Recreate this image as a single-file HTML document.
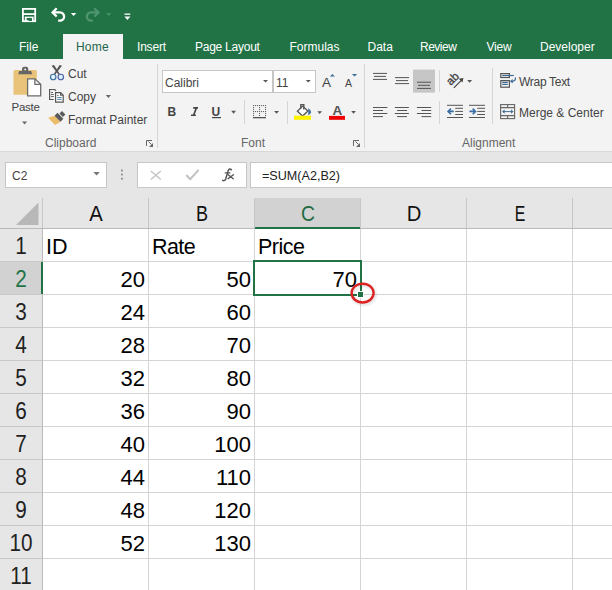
<!DOCTYPE html><html><head><meta charset="utf-8"><style>
*{margin:0;padding:0;box-sizing:border-box}
html,body{width:612px;height:590px;overflow:hidden;background:#fff;font-family:"Liberation Sans",sans-serif}
.a{position:absolute}
.t{position:absolute;white-space:nowrap;line-height:1}
svg{position:absolute;overflow:visible}
</style></head><body>
<div class="a" style="left:0px;top:0px;width:612px;height:59px;background:#217346;"></div>
<div class="a" style="left:63px;top:34px;width:60px;height:25px;background:#f3f3f3;"></div>
<div class="t" style="left:19px;top:41px;font-size:12px;color:#fff;letter-spacing:0">File</div>
<div class="t" style="left:76px;top:41px;font-size:12px;color:#24634a;letter-spacing:0.2px">Home</div>
<div class="t" style="left:137px;top:41px;font-size:12px;color:#fff;letter-spacing:-0.2px">Insert</div>
<div class="t" style="left:195px;top:41px;font-size:12px;color:#fff;letter-spacing:-0.25px">Page Layout</div>
<div class="t" style="left:289.5px;top:41px;font-size:12px;color:#fff;letter-spacing:0">Formulas</div>
<div class="t" style="left:367.5px;top:41px;font-size:12px;color:#fff;letter-spacing:0">Data</div>
<div class="t" style="left:420px;top:41px;font-size:12px;color:#fff;letter-spacing:-0.5px">Review</div>
<div class="t" style="left:486.5px;top:41px;font-size:12px;color:#fff;letter-spacing:-0.2px">View</div>
<div class="t" style="left:540px;top:41px;font-size:12px;color:#fff;letter-spacing:0">Developer</div>
<div class="a" style="left:0px;top:59px;width:612px;height:92px;background:#f3f3f3;"></div>
<div class="t" style="left:11.5px;top:102px;font-size:11.5px;color:#444;letter-spacing:-0.25px">Paste</div>
<div class="t" style="left:68px;top:68px;font-size:12px;color:#444;">Cut</div>
<div class="t" style="left:68px;top:91px;font-size:12px;color:#444;">Copy</div>
<div class="t" style="left:68px;top:114px;font-size:12px;color:#444;">Format Painter</div>
<div class="t" style="left:45px;top:137px;font-size:12px;color:#666;">Clipboard</div>
<div class="a" style="left:157px;top:64px;width:1px;height:84px;background:#d5d5d5;"></div>
<div class="a" style="left:244px;top:100px;width:1px;height:24px;background:#d5d5d5;"></div>
<div class="a" style="left:287px;top:101px;width:1px;height:23px;background:#d5d5d5;"></div>
<div class="a" style="left:439px;top:70px;width:1px;height:22px;background:#d5d5d5;"></div>
<div class="a" style="left:439px;top:101px;width:1px;height:23px;background:#d5d5d5;"></div>
<div class="a" style="left:492px;top:68px;width:1px;height:56px;background:#d5d5d5;"></div>
<div class="t" style="left:241px;top:137px;font-size:12px;color:#666;">Font</div>
<div class="a" style="left:364px;top:64px;width:1px;height:84px;background:#d5d5d5;"></div>
<div class="t" style="left:519px;top:76px;font-size:12px;color:#444;letter-spacing:-0.3px">Wrap Text</div>
<div class="t" style="left:519px;top:107px;font-size:12px;color:#444;">Merge &amp; Center</div>
<div class="t" style="left:462px;top:137px;font-size:12px;color:#666;">Alignment</div>
<div class="a" style="left:0px;top:151px;width:612px;height:47px;background:#e6e6e6;"></div>
<div class="a" style="left:0px;top:151px;width:612px;height:1px;background:#d8d8d8;"></div>
<div class="a" style="left:5px;top:162px;width:102px;height:26px;background:#fff;border:1px solid #c6c6c6"></div>
<div class="t" style="left:12px;top:170px;font-size:12px;color:#444;">C2</div>
<div class="a" style="left:137px;top:162px;width:110px;height:26px;background:#fff;border:1px solid #c6c6c6"></div>
<div class="a" style="left:250px;top:162px;width:380px;height:26px;background:#fff;border:1px solid #c6c6c6"></div>
<div class="t" style="left:262px;top:170px;font-size:12.6px;color:#222;">=SUM(A2,B2)</div>
<div class="a" style="left:0px;top:198px;width:612px;height:30px;background:#e6e6e6;"></div>
<div class="a" style="left:255px;top:198px;width:105px;height:30px;background:#d2d2d2;"></div>
<div class="a" style="left:0px;top:228px;width:42px;height:362px;background:#e6e6e6;"></div>
<div class="a" style="left:0px;top:262px;width:42px;height:32px;background:#d2d2d2;"></div>
<div class="a" style="left:43px;top:261px;width:569px;height:1px;background:#d4d4d4;"></div>
<div class="a" style="left:43px;top:294px;width:569px;height:1px;background:#d4d4d4;"></div>
<div class="a" style="left:43px;top:327px;width:569px;height:1px;background:#d4d4d4;"></div>
<div class="a" style="left:43px;top:360px;width:569px;height:1px;background:#d4d4d4;"></div>
<div class="a" style="left:43px;top:393px;width:569px;height:1px;background:#d4d4d4;"></div>
<div class="a" style="left:43px;top:426px;width:569px;height:1px;background:#d4d4d4;"></div>
<div class="a" style="left:43px;top:459px;width:569px;height:1px;background:#d4d4d4;"></div>
<div class="a" style="left:43px;top:492px;width:569px;height:1px;background:#d4d4d4;"></div>
<div class="a" style="left:43px;top:525px;width:569px;height:1px;background:#d4d4d4;"></div>
<div class="a" style="left:43px;top:558px;width:569px;height:1px;background:#d4d4d4;"></div>
<div class="a" style="left:148px;top:228px;width:1px;height:362px;background:#d4d4d4;"></div>
<div class="a" style="left:254px;top:228px;width:1px;height:362px;background:#d4d4d4;"></div>
<div class="a" style="left:360px;top:228px;width:1px;height:362px;background:#d4d4d4;"></div>
<div class="a" style="left:466px;top:228px;width:1px;height:362px;background:#d4d4d4;"></div>
<div class="a" style="left:572px;top:228px;width:1px;height:362px;background:#d4d4d4;"></div>
<div class="a" style="left:0px;top:228px;width:612px;height:1px;background:#bababa;"></div>
<div class="a" style="left:42px;top:198px;width:1px;height:30px;background:#c6c6c6;"></div>
<div class="a" style="left:148px;top:198px;width:1px;height:30px;background:#c6c6c6;"></div>
<div class="a" style="left:254px;top:198px;width:1px;height:30px;background:#c6c6c6;"></div>
<div class="a" style="left:360px;top:198px;width:1px;height:30px;background:#c6c6c6;"></div>
<div class="a" style="left:466px;top:198px;width:1px;height:30px;background:#c6c6c6;"></div>
<div class="a" style="left:572px;top:198px;width:1px;height:30px;background:#c6c6c6;"></div>
<div class="a" style="left:42px;top:228px;width:1px;height:362px;background:#bababa;"></div>
<div class="a" style="left:0px;top:261px;width:42px;height:1px;background:#c9c9c9;"></div>
<div class="a" style="left:0px;top:294px;width:42px;height:1px;background:#c9c9c9;"></div>
<div class="a" style="left:0px;top:327px;width:42px;height:1px;background:#c9c9c9;"></div>
<div class="a" style="left:0px;top:360px;width:42px;height:1px;background:#c9c9c9;"></div>
<div class="a" style="left:0px;top:393px;width:42px;height:1px;background:#c9c9c9;"></div>
<div class="a" style="left:0px;top:426px;width:42px;height:1px;background:#c9c9c9;"></div>
<div class="a" style="left:0px;top:459px;width:42px;height:1px;background:#c9c9c9;"></div>
<div class="a" style="left:0px;top:492px;width:42px;height:1px;background:#c9c9c9;"></div>
<div class="a" style="left:0px;top:525px;width:42px;height:1px;background:#c9c9c9;"></div>
<div class="a" style="left:0px;top:558px;width:42px;height:1px;background:#c9c9c9;"></div>
<div class="a" style="left:255px;top:227px;width:105px;height:2px;background:#217346;"></div>
<div class="a" style="left:41px;top:262px;width:2px;height:32px;background:#217346;"></div>
<svg style="left:0;top:198px" width="42" height="30"><path d="M38.5 4.5 L38.5 27 L16 27 Z" fill="#b8b8b8"/></svg>
<div class="t" style="left:66.2px;top:203px;width:60px;text-align:center;font-size:22px;color:#111;transform:scaleX(0.92)">A</div>
<div class="t" style="left:171.7px;top:203px;width:60px;text-align:center;font-size:22px;color:#111;transform:scaleX(0.82)">B</div>
<div class="t" style="left:278.2px;top:203px;width:60px;text-align:center;font-size:22px;color:#1e6b41;transform:scaleX(0.88)">C</div>
<div class="t" style="left:384.15px;top:203px;width:60px;text-align:center;font-size:22px;color:#111;transform:scaleX(0.92)">D</div>
<div class="t" style="left:490px;top:203px;width:60px;text-align:center;font-size:22px;color:#111;transform:scaleX(0.72)">E</div>
<div class="t" style="left:0;top:235px;width:42px;text-align:center;font-size:23px;color:#222;transform:scaleX(0.9)">1</div>
<div class="t" style="left:0;top:268px;width:42px;text-align:center;font-size:23px;color:#217346;transform:scaleX(0.9)">2</div>
<div class="t" style="left:0;top:301px;width:42px;text-align:center;font-size:23px;color:#222;transform:scaleX(0.9)">3</div>
<div class="t" style="left:0;top:334px;width:42px;text-align:center;font-size:23px;color:#222;transform:scaleX(0.9)">4</div>
<div class="t" style="left:0;top:367px;width:42px;text-align:center;font-size:23px;color:#222;transform:scaleX(0.9)">5</div>
<div class="t" style="left:0;top:400px;width:42px;text-align:center;font-size:23px;color:#222;transform:scaleX(0.9)">6</div>
<div class="t" style="left:0;top:433px;width:42px;text-align:center;font-size:23px;color:#222;transform:scaleX(0.9)">7</div>
<div class="t" style="left:0;top:466px;width:42px;text-align:center;font-size:23px;color:#222;transform:scaleX(0.9)">8</div>
<div class="t" style="left:0;top:499px;width:42px;text-align:center;font-size:23px;color:#222;transform:scaleX(0.9)">9</div>
<div class="t" style="left:0;top:532px;width:42px;text-align:center;font-size:23px;color:#222;transform:scaleX(0.9)">10</div>
<div class="t" style="left:0;top:565px;width:42px;text-align:center;font-size:23px;color:#222;transform:scaleX(0.9)">11</div>
<div class="t" style="left:46px;top:236.5px;font-size:21.5px;color:#000;">ID</div>
<div class="t" style="left:152px;top:236.5px;font-size:21.5px;color:#000;letter-spacing:-0.6px">Rate</div>
<div class="t" style="left:258px;top:236.5px;font-size:21.5px;color:#000;letter-spacing:-0.5px">Price</div>
<div class="t" style="left:42px;top:269px;width:103px;text-align:right;font-size:22px;color:#000">20</div>
<div class="t" style="left:148px;top:269px;width:103px;text-align:right;font-size:22px;color:#000">50</div>
<div class="t" style="left:42px;top:302px;width:103px;text-align:right;font-size:22px;color:#000">24</div>
<div class="t" style="left:148px;top:302px;width:103px;text-align:right;font-size:22px;color:#000">60</div>
<div class="t" style="left:42px;top:335px;width:103px;text-align:right;font-size:22px;color:#000">28</div>
<div class="t" style="left:148px;top:335px;width:103px;text-align:right;font-size:22px;color:#000">70</div>
<div class="t" style="left:42px;top:368px;width:103px;text-align:right;font-size:22px;color:#000">32</div>
<div class="t" style="left:148px;top:368px;width:103px;text-align:right;font-size:22px;color:#000">80</div>
<div class="t" style="left:42px;top:401px;width:103px;text-align:right;font-size:22px;color:#000">36</div>
<div class="t" style="left:148px;top:401px;width:103px;text-align:right;font-size:22px;color:#000">90</div>
<div class="t" style="left:42px;top:434px;width:103px;text-align:right;font-size:22px;color:#000">40</div>
<div class="t" style="left:148px;top:434px;width:103px;text-align:right;font-size:22px;color:#000">100</div>
<div class="t" style="left:42px;top:467px;width:103px;text-align:right;font-size:22px;color:#000">44</div>
<div class="t" style="left:148px;top:467px;width:103px;text-align:right;font-size:22px;color:#000">110</div>
<div class="t" style="left:42px;top:500px;width:103px;text-align:right;font-size:22px;color:#000">48</div>
<div class="t" style="left:148px;top:500px;width:103px;text-align:right;font-size:22px;color:#000">120</div>
<div class="t" style="left:42px;top:533px;width:103px;text-align:right;font-size:22px;color:#000">52</div>
<div class="t" style="left:148px;top:533px;width:103px;text-align:right;font-size:22px;color:#000">130</div>
<div class="t" style="left:254px;top:269px;width:103px;text-align:right;font-size:22px;color:#000">70</div>
<div class="a" style="left:253px;top:260px;width:109px;height:36px;background:transparent;border:2px solid #217346"></div>
<div class="a" style="left:357px;top:291px;width:7px;height:7px;background:#fff;"></div>
<div class="a" style="left:358px;top:292px;width:5px;height:5px;background:#217346;"></div>
<svg style="left:0;top:0" width="612" height="590"><ellipse cx="363.8" cy="294.6" rx="11" ry="9.4" fill="none" stroke="rgba(0,0,0,0.035)" stroke-width="6"/><ellipse cx="363.8" cy="294.6" rx="11" ry="9.4" fill="none" stroke="rgba(0,0,0,0.04)" stroke-width="3.5"/><ellipse cx="362.6" cy="293.1" rx="11" ry="9.4" fill="none" stroke="#dd2222" stroke-width="2.4"/></svg>

<svg style="left:0;top:0" width="612" height="200" viewBox="0 0 612 200">
<!-- save -->
<rect x="22.9" y="8.9" width="12.3" height="12.3" fill="none" stroke="#fff" stroke-width="1.8"/>
<rect x="22" y="13.2" width="14" height="1.8" fill="#fff"/>
<rect x="24.8" y="16.6" width="8.8" height="5.4" fill="#fff"/>
<rect x="26.6" y="17.9" width="5.3" height="2.3" fill="#217346"/>
<rect x="28.6" y="19.5" width="3.3" height="1.5" fill="#217346"/>
<!-- undo -->
<g fill="none" stroke="#fff" stroke-width="2.3">
 <path d="M52.6 12.4H60A4.1 4.1 0 0 1 60 20.6H58.2"/>
 <path d="M56.7 8.3L52.6 12.4L56.7 16.5"/>
</g>
<path d="M70.8 13h5.6l-2.8 3z" fill="#fff"/>
<!-- redo faded -->
<g fill="none" stroke="#4f9670" stroke-width="2.3">
 <path d="M98.4 12.4H91A4.1 4.1 0 0 0 91 20.6H92.8"/>
 <path d="M94.3 8.3L98.4 12.4L94.3 16.5"/>
</g>
<path d="M106 13.2h5.3l-2.65 2.6z" fill="#4f9670"/>
<!-- customize -->
<rect x="124.5" y="13.5" width="5.8" height="1.3" fill="#fff"/>
<path d="M124.4 16.4h6l-3 3.6z" fill="#fff"/>

<!-- paste -->
<path d="M15 70h20.3a1.5 1.5 0 0 1 1.5 1.5v23.3h-23.3v-23.3a1.5 1.5 0 0 1 1.5-1.5z" fill="#e9c379"/>
<path d="M19.2 71h12l1 3.2h-14z" fill="#666"/>
<rect x="22" y="66.8" width="6.3" height="5.4" rx="2.2" fill="#666"/>
<circle cx="25.15" cy="69.4" r="0.95" fill="#f3f3f3"/>
<path d="M27.6 78.8h7.3l5.8 5.6v11.5h-13.1z" fill="#fff" stroke="#6b6b6b" stroke-width="1.3"/>
<path d="M34.9 78.8v5.6h5.8" fill="none" stroke="#6b6b6b" stroke-width="1.3"/>
<path d="M22 121.6h5.2l-2.6 2.8z" fill="#6b6b6b"/>

<!-- scissors -->
<path d="M51.6 65.8L54 65L60.2 74.4L58.8 75z" fill="#555"/>
<path d="M62 65.8L59.6 65L53.4 74.4L54.8 75z" fill="#555"/>
<circle cx="53.2" cy="77" r="2.75" fill="#dff1fb" stroke="#3f74a0" stroke-width="1.2"/>
<circle cx="60.8" cy="77" r="2.75" fill="#dff1fb" stroke="#4e66a8" stroke-width="1.2"/>
<!-- copy -->
<path d="M105.8 95.1h5.2l-2.6 3z" fill="#666"/>
<path d="M53.8 99.5h-4.2v-10h5.2l1.2 1.3" fill="none" stroke="#555" stroke-width="1.2"/>
<rect x="51" y="92" width="2" height="0.9" fill="#555"/>
<rect x="51" y="94" width="2.8" height="0.9" fill="#555"/>
<rect x="51" y="96" width="2.8" height="0.9" fill="#555"/>
<path d="M55.6 92.6h5l2.6 2.6v7h-7.6z" fill="#fff" stroke="#555" stroke-width="1.2"/>
<path d="M60.6 92.6v2.6h2.6" fill="none" stroke="#555" stroke-width="1.1"/>
<rect x="57.2" y="95" width="1.4" height="0.9" fill="#555"/>
<rect x="57.2" y="97" width="4.4" height="0.9" fill="#3d7a9c"/>
<rect x="57.2" y="98.9" width="4.4" height="0.9" fill="#3d7a9c"/>

<!-- format painter -->
<g transform="translate(59,117.4) rotate(45)">
 <path d="M-4.3 1.9H4.1L2.6 8.2L-7.4 8z" fill="#ebbd6a"/>
 <rect x="-4.3" y="-2.1" width="8.4" height="4.1" fill="#5a5a5a"/>
 <rect x="-2.4" y="-6.6" width="4.8" height="3.5" fill="#5a5a5a"/>
</g>
<!-- launchers -->
<g fill="none" stroke="#666" stroke-width="1">
 <path d="M146.5 146v-5.5h5.5M148.5 141.5l3 3"/>
 <path d="M353.5 146v-5.5h5.5M355.5 141.5l3 3"/>
</g>
<path d="M153 143v4h-4z" fill="#666"/>
<path d="M360 143v4h-4z" fill="#666"/>
<!-- font name box / size box -->
<rect x="162.5" y="70.5" width="110" height="22" fill="#fff" stroke="#c6c6c6"/>
<rect x="273.5" y="70.5" width="42" height="22" fill="#fff" stroke="#c6c6c6"/>
<path d="M263 80h5l-2.5 2.5z" fill="#555"/>
<path d="M305.8 80h5l-2.5 2.5z" fill="#555"/>
<!-- grow/shrink -->
<path d="M329.9 76.5h5l-2.5-2.4z" fill="#3e6d9c"/>
<path d="M351.9 73.9h5.3l-2.65 2.6z" fill="#3e6d9c"/>
<!-- B I U arrow -->
<path d="M231.2 110.8h4.8l-2.4 3z" fill="#555"/>
<rect x="212" y="117" width="9" height="1.2" fill="#444"/>
<!-- borders -->
<g fill="#666">
<rect x="253" y="105" width="1.1" height="1.1"/><rect x="253" y="111" width="1.1" height="1.1"/><rect x="255" y="105" width="1.1" height="1.1"/><rect x="255" y="111" width="1.1" height="1.1"/><rect x="257" y="105" width="1.1" height="1.1"/><rect x="257" y="111" width="1.1" height="1.1"/><rect x="259" y="105" width="1.1" height="1.1"/><rect x="259" y="111" width="1.1" height="1.1"/><rect x="261" y="105" width="1.1" height="1.1"/><rect x="261" y="111" width="1.1" height="1.1"/><rect x="263" y="105" width="1.1" height="1.1"/><rect x="263" y="111" width="1.1" height="1.1"/><rect x="265" y="105" width="1.1" height="1.1"/><rect x="265" y="111" width="1.1" height="1.1"/><rect x="253" y="107" width="1.1" height="1.1"/><rect x="253" y="109" width="1.1" height="1.1"/><rect x="253" y="113" width="1.1" height="1.1"/><rect x="253" y="115" width="1.1" height="1.1"/><rect x="259" y="107" width="1.1" height="1.1"/><rect x="259" y="109" width="1.1" height="1.1"/><rect x="259" y="113" width="1.1" height="1.1"/><rect x="259" y="115" width="1.1" height="1.1"/><rect x="265" y="107" width="1.1" height="1.1"/><rect x="265" y="109" width="1.1" height="1.1"/><rect x="265" y="113" width="1.1" height="1.1"/><rect x="265" y="115" width="1.1" height="1.1"/>
</g>
<rect x="253" y="117" width="13" height="1.3" fill="#555"/>
<path d="M274.1 111h4.9l-2.45 2.7z" fill="#555"/>
<!-- fill color -->
<path d="M297.4 111.2L302.6 106.1L307.9 111.1L302.6 116z" fill="#fff" stroke="#555" stroke-width="1.3"/>
<path d="M300.8 108.8V104.6H303.8V109.6" fill="none" stroke="#555" stroke-width="1.4"/>
<path d="M308.2 108.2C310 109.3 311.2 110.9 311 112.3C310.7 113.8 309.5 114.8 308.3 115.2z" fill="#3f6fa0"/>
<rect x="294" y="115.7" width="17" height="4.1" fill="#fff200"/>
<path d="M317.3 111.2h4.7l-2.35 2.7z" fill="#555"/>
<!-- font color -->
<rect x="329" y="115.9" width="16" height="3.9" fill="#ee0000"/>
<path d="M351.2 111h4.7l-2.35 2.8z" fill="#555"/>
<!-- alignment -->
<g fill="#555">
 <rect x="373" y="72.9" width="14" height="1"/><rect x="374" y="75.9" width="12" height="1"/><rect x="373" y="78.9" width="14" height="1"/>
 <rect x="395" y="77.1" width="14" height="1"/><rect x="396" y="80.1" width="12" height="1"/><rect x="395" y="83.1" width="14" height="1"/>
</g>
<rect x="413" y="69.6" width="22" height="23" fill="#c6c6c6"/>
<g fill="#555">
 <rect x="417" y="81.7" width="14" height="1"/><rect x="418" y="84.8" width="12" height="1"/><rect x="417" y="87.9" width="14" height="1"/>
 <rect x="373" y="107" width="14.3" height="1"/><rect x="373" y="110" width="10" height="1"/><rect x="373" y="113" width="14.3" height="1"/><rect x="373" y="116.1" width="10" height="1"/>
 <rect x="394.8" y="107" width="14.1" height="1"/><rect x="397.1" y="110" width="9.9" height="1"/><rect x="394.8" y="113" width="14.1" height="1"/><rect x="397.1" y="116.1" width="9.9" height="1"/>
 <rect x="416.9" y="107" width="14.3" height="1"/><rect x="421.5" y="110" width="9.7" height="1"/><rect x="416.9" y="113" width="14.3" height="1"/><rect x="421.5" y="116.1" width="9.7" height="1"/>
 <rect x="447" y="104.8" width="16" height="1"/><rect x="455.2" y="107.8" width="7.8" height="1"/><rect x="455.2" y="110.9" width="7.8" height="1"/><rect x="455.2" y="114" width="7.8" height="1"/><rect x="447" y="117" width="16" height="1"/>
 <rect x="469" y="104.8" width="16" height="1"/><rect x="477.2" y="107.8" width="7.8" height="1"/><rect x="477.2" y="110.9" width="7.8" height="1"/><rect x="477.2" y="114" width="7.8" height="1"/><rect x="469" y="117" width="16" height="1"/>
</g>
<g fill="none" stroke="#3a6fa6" stroke-width="1.6">
 <path d="M448.5 111.4h5.3M450.9 108.6l-2.8 2.8l2.8 2.8"/>
 <path d="M469.5 111.4h5.3M472.7 108.6l2.8 2.8l-2.8 2.8"/>
</g>
<!-- orientation -->
<g transform="translate(452.3,78.6) rotate(-45)"><text x="0" y="4.2" font-family="Liberation Sans" font-size="11.5" fill="#444" stroke="#444" stroke-width="0.35" text-anchor="middle">ab</text></g>
<path d="M453.8 87.8l8-8" stroke="#444" stroke-width="1.2"/>
<path d="M463.4 77.9l-4.6 0.9l3.7 3.7z" fill="#444"/>
<path d="M467.2 79.9h4.9l-2.45 2.9z" fill="#555"/>
<!-- wrap text -->
<g fill="none" stroke="#555" stroke-width="1.2">
 <rect x="500.8" y="73.6" width="8.6" height="3.9"/>
 <rect x="500.8" y="80.6" width="8.6" height="6.6"/>
</g>
<g fill="none" stroke="#3f6a96" stroke-width="1.2">
 <path d="M502.2 75.5H513.8"/>
 <path d="M502.2 82.3H507.8M502.2 84.4H507.8"/>
 <path d="M515.4 77.6V78.8C515.4 80.5 513.8 81.3 511.5 81.3"/>
</g>
<path d="M510 81.3l2.6-2.3v4.6z" fill="#3f6a96"/>
<!-- merge center -->
<g fill="none" stroke="#666" stroke-width="1.1">
 <rect x="500.6" y="104.6" width="14" height="14"/>
 <path d="M500.6 107.6h14M500.6 115.6h14M507.6 104.6v3M507.6 115.6v3"/>
</g>
<path d="M503 111.6h9.5" stroke="#46709a" stroke-width="1" fill="none"/>
<path d="M502 111.6l2.6-2.2v4.4z M513.6 111.6l-2.6-2.2v4.4z" fill="#46709a"/>
<!-- name box arrow -->
<path d="M93.3 172h6.6l-3.3 3.6z" fill="#777"/>
<!-- dots -->
<g fill="#888"><rect x="121" y="169.6" width="1.8" height="1.8"/><rect x="121" y="173.6" width="1.8" height="1.8"/><rect x="121" y="177.8" width="1.8" height="1.8"/></g>
<!-- X and check -->
<path d="M150.8 171l10 8.6M160.8 171l-10 8.6" stroke="#c2c2c2" stroke-width="1.3" fill="none"/>
<path d="M186.3 175l3.9 4.3l8.4-9.4" stroke="#c2c2c2" stroke-width="2.1" fill="none"/>
</svg>

<div class="t" style="left:167.5px;top:106px;font-size:12px;color:#444;font-weight:bold">B</div>
<svg style="left:0;top:0" width="612" height="200"><path d="M193.2 107.9h4.8M191 115.3h4.8M196.4 107.9l-2.8 7.4" stroke="#444" stroke-width="1.6" fill="none"/></svg>
<div class="t" style="left:211.5px;top:106px;font-size:12px;color:#444;font-weight:bold">U</div>
<div class="t" style="left:322px;top:76px;font-size:13.5px;color:#444;">A</div>
<div class="t" style="left:345px;top:78px;font-size:10.5px;color:#444;">A</div>
<div class="t" style="left:332.5px;top:104px;font-size:13.5px;color:#555;font-weight:bold">A</div>
<div class="t" style="left:165px;top:76.5px;font-size:12px;color:#444;">Calibri</div>
<div class="t" style="left:276px;top:77px;font-size:12px;color:#444;">11</div>
<svg style="left:0;top:0" width="612" height="200"><g fill="none" stroke="#555" stroke-linecap="round"><path d="M231.3 169.9C230.7 168.7 228.9 168.7 228.3 170.4L225.7 178.9C225.2 180.4 223.9 181 222.6 180.4" stroke-width="1.5"/><path d="M225.2 172.9H229.9" stroke-width="1.2"/><path d="M228.2 174.7L233.2 178.7M233.4 174.7L228 178.7" stroke-width="1.4"/></g></svg>
</body></html>
